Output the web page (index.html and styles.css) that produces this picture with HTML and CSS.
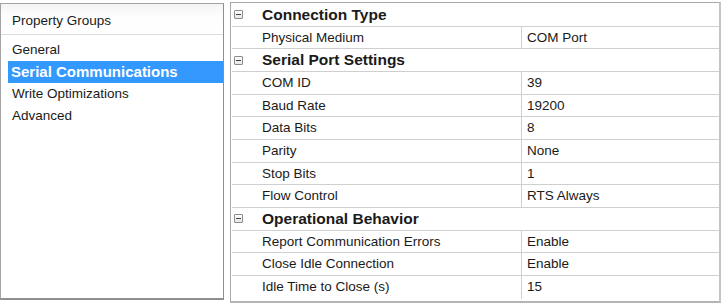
FILE: index.html
```html
<!DOCTYPE html>
<html lang="en">
  <head>
    <meta charset="UTF-8" />
    <meta name="viewport" content="width=device-width, initial-scale=1.0" />
    <title>Serial Communications</title>
    <link rel="stylesheet" href="styles.css">
  </head>

  <body>
    <div class="dialog">
      <div class="groups">
        <div class="groups-header">Property Groups</div>
        <ul class="group-list">
          <li>General</li>
          <li class="selected">Serial Communications</li>
          <li>Write Optimizations</li>
          <li>Advanced</li>
        </ul>
      </div>

      <div class="grid">
        <div class="row category">
          <span class="gutter"><span class="toggle"></span></span>
          <span class="cat-name">Connection Type</span>
        </div>
        <div class="row">
          <span class="gutter"></span>
          <span class="name">Physical Medium</span>
          <span class="value">COM Port</span>
        </div>

        <div class="row category">
          <span class="gutter"><span class="toggle"></span></span>
          <span class="cat-name">Serial Port Settings</span>
        </div>
        <div class="row">
          <span class="gutter"></span>
          <span class="name">COM ID</span>
          <span class="value">39</span>
        </div>
        <div class="row">
          <span class="gutter"></span>
          <span class="name">Baud Rate</span>
          <span class="value">19200</span>
        </div>
        <div class="row">
          <span class="gutter"></span>
          <span class="name">Data Bits</span>
          <span class="value">8</span>
        </div>
        <div class="row">
          <span class="gutter"></span>
          <span class="name">Parity</span>
          <span class="value">None</span>
        </div>
        <div class="row">
          <span class="gutter"></span>
          <span class="name">Stop Bits</span>
          <span class="value">1</span>
        </div>
        <div class="row">
          <span class="gutter"></span>
          <span class="name">Flow Control</span>
          <span class="value">RTS Always</span>
        </div>

        <div class="row category">
          <span class="gutter"><span class="toggle"></span></span>
          <span class="cat-name">Operational Behavior</span>
        </div>
        <div class="row">
          <span class="gutter"></span>
          <span class="name">Report Communication Errors</span>
          <span class="value">Enable</span>
        </div>
        <div class="row">
          <span class="gutter"></span>
          <span class="name">Close Idle Connection</span>
          <span class="value">Enable</span>
        </div>
        <div class="row last">
          <span class="gutter"></span>
          <span class="name">Idle Time to Close (s)</span>
          <span class="value">15</span>
        </div>
      </div>
    </div>
  </body>
</html>
```

FILE: styles.css
```css
body {
  font-family: "Liberation Sans", Arial, sans-serif;
  font-size: 13.5px;
  color: #1a1a1a;
  margin: 0;
  padding: 0;
  background-color: #fff;
}

.dialog {
  display: flex;
  align-items: flex-start;
  gap: 6px;
  padding: 2px 6px 0 0;
}

/* left list */
.groups {
  width: 224px;
  height: 297px;
  margin-top: 1px;
  box-sizing: border-box;
  border: 1px solid #a3a3a3;
  border-right-color: #8f8f8f;
  border-bottom: 2px solid #8f8f8f;
  background-color: #fff;
}

.groups-header {
  height: 30px;
  line-height: 33px;
  padding-left: 11px;
  background: linear-gradient(#f4f4f4, #fdfdfd 40%, #fff);
  border-bottom: 1px solid #dcdcdc;
}

.group-list {
  list-style: none;
  margin: 4px 0 0 7px;
  padding: 0;
}

.group-list li {
  height: 22px;
  line-height: 22px;
  padding-left: 4px;
  white-space: nowrap;
}

.group-list li.selected {
  background-color: #3399ff;
  color: #fff;
  font-weight: bold;
  font-size: 15px;
  padding-left: 3px;
}

/* property grid */
.grid {
  width: 491px;
  height: 301px;
  box-sizing: border-box;
  border: 1px solid #a8a8a8;
  border-bottom: 2px solid #b5b5b5;
  border-right: 2px solid #c4c4c4;
  padding-top: 1px;
  background-color: #fff;
}

.row {
  display: flex;
  height: 22.67px;
  box-sizing: border-box;
  border-bottom: 1px solid #cfcfcf;
  margin-left: 1px;
  align-items: stretch;
}

.row.last {
  border-bottom: none;
}

.gutter {
  width: 20px;
  flex: none;
  display: flex;
  align-items: center;
  padding-left: 2px;
  box-sizing: border-box;
}

.toggle {
  width: 9px;
  height: 9px;
  box-sizing: border-box;
  border: 1px solid #8c8c8c;
  border-radius: 1px;
  background: linear-gradient(#fff, #e6e6e6);
  position: relative;
}

.toggle::after {
  content: "";
  position: absolute;
  left: 1px;
  right: 1px;
  top: 3px;
  height: 1px;
  background-color: #404040;
}

.name {
  width: 269px;
  flex: none;
  box-sizing: border-box;
  padding-left: 10px;
  line-height: 22px;
  white-space: nowrap;
}

.cat-name {
  padding-left: 10px;
  font-weight: bold;
  font-size: 15.5px;
  line-height: 22px;
  white-space: nowrap;
}

.value {
  flex: 1;
  border-left: 1px solid #cfcfcf;
  padding-left: 5px;
  line-height: 22px;
  white-space: nowrap;
}
```
